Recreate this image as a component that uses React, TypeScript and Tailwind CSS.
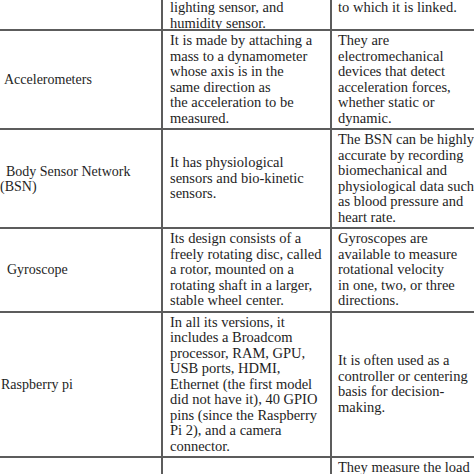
type Row = {
  name: string[]
  nameClass: string
  how: string[]
  what: string[]
}

const rows: Row[] = [
  {
    name: ['Accelerometers'],
    nameClass: 'pl-[4px]',
    how: [
      'It is made by attaching a',
      'mass to a dynamometer',
      'whose axis is in the',
      'same direction as',
      'the acceleration to be',
      'measured.',
    ],
    what: [
      'They are',
      'electromechanical',
      'devices that detect',
      'acceleration forces,',
      'whether static or',
      'dynamic.',
    ],
  },
  {
    name: ['Body Sensor Network', '(BSN)'],
    nameClass: 'pl-0 indent-[6px] leading-[15px]',
    how: ['It has physiological', 'sensors and bio-kinetic', 'sensors.'],
    what: [
      'The BSN can be highly',
      'accurate by recording',
      'biomechanical and',
      'physiological data such',
      'as blood pressure and',
      'heart rate.',
    ],
  },
  {
    name: ['Gyroscope'],
    nameClass: 'pl-[7px]',
    how: [
      'Its design consists of a',
      'freely rotating disc, called',
      'a rotor, mounted on a',
      'rotating shaft in a larger,',
      'stable wheel center.',
    ],
    what: [
      'Gyroscopes are',
      'available to measure',
      'rotational velocity',
      'in one, two, or three',
      'directions.',
    ],
  },
  {
    name: ['Raspberry pi'],
    nameClass: 'pl-[1px]',
    how: [
      'In all its versions, it',
      'includes a Broadcom',
      'processor, RAM, GPU,',
      'USB ports, HDMI,',
      'Ethernet (the first model',
      'did not have it), 40 GPIO',
      'pins (since the Raspberry',
      'Pi 2), and a camera',
      'connector.',
    ],
    what: [
      'It is often used as a',
      'controller or centering',
      'basis for decision-',
      'making.',
    ],
  },
]

function Lines({ lines }: { lines: string[] }) {
  return (
    <div className="whitespace-nowrap">
      {lines.map((l, i) => (
        <div key={i}>{l}</div>
      ))}
    </div>
  )
}

export default function App() {
  return (
    <div className="w-[474px] h-[474px] overflow-hidden bg-white text-[#1e1e1e] font-['Liberation_Serif',serif] text-[14.5px] leading-[15.5px]">
      {/* cut-off row at the top */}
      <div className="grid grid-cols-[163px_169px_1fr] h-[31px] border-b-2 border-[#5c5c5c] overflow-hidden">
        <div className="border-r-2 border-[#5c5c5c] pl-[5px] overflow-hidden">
          <div className="-mt-[12px] text-[#d6d6d6] text-[13px]">Arduino</div>
        </div>
        <div className="border-r-2 border-[#5c5c5c] pl-[7px] flex flex-col justify-end pb-[1px]">
          <Lines lines={['lighting sensor, and', 'humidity sensor.']} />
        </div>
        <div className="pl-[6px] flex flex-col justify-end pb-[17px] overflow-hidden">
          <Lines lines={['to which it is linked.']} />
        </div>
      </div>

      {rows.map((r, i) => (
        <div key={i} className="grid grid-cols-[163px_169px_1fr] border-b-2 border-[#5c5c5c]">
          <div className={`border-r-2 border-[#5c5c5c] py-[2px] flex flex-col justify-center text-[14px] ${r.nameClass}`}>
            <p>
              {r.name.map((n, j) => (
                <span key={j}>
                  {j > 0 && <br />}
                  {n}
                </span>
              ))}
            </p>
          </div>
          <div className="border-r-2 border-[#5c5c5c] py-[2px] pl-[7px] flex flex-col justify-center">
            <Lines lines={r.how} />
          </div>
          <div className="py-[2px] pl-[6px] flex flex-col justify-center overflow-hidden">
            <Lines lines={r.what} />
          </div>
        </div>
      ))}

      {/* next row, cut off at the bottom */}
      <div className="grid grid-cols-[163px_169px_1fr] h-[40px]">
        <div className="border-r-2 border-[#5c5c5c]" />
        <div className="border-r-2 border-[#5c5c5c]" />
        <div className="pl-[6px] pt-[2px] whitespace-nowrap">They measure the load</div>
      </div>
    </div>
  )
}
